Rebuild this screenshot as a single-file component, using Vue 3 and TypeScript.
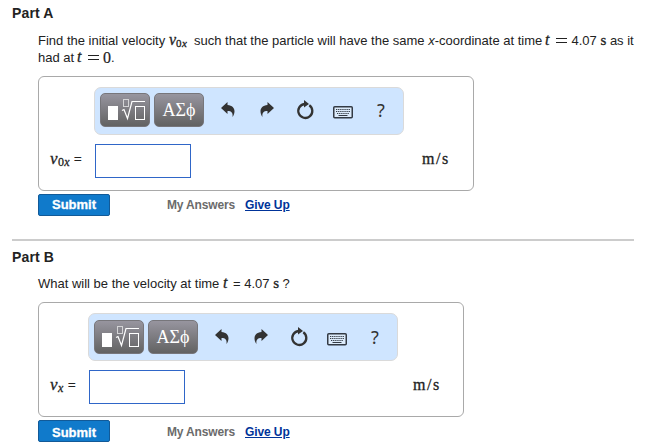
<script setup lang="ts">
import { ref } from 'vue'

interface Part {
  id: string
  title: string
  subscript: string
  unit: string
}

const parts: Part[] = [
  { id: 'a', title: 'Part A', subscript: '0x', unit: 'm/s' },
  { id: 'b', title: 'Part B', subscript: 'x', unit: 'm/s' },
]

const answers = ref<Record<string, string>>({ a: '', b: '' })
</script>

<template>
  <main class="page">
    <section v-for="part in parts" :key="part.id" class="part" :class="'part-' + part.id">
      <h2>{{ part.title }}</h2>
      <div class="content">
        <div v-if="part.id === 'a'" class="question">
          <div class="line">
            <span class="seg find">Find the initial velocity</span>
            <span class="seg var"><i class="m">v</i><span class="sub"><b>0</b><i>x</i></span></span>
            <span class="seg such">such that the particle will have the same <i>x</i>-coordinate at time</span>
            <span class="seg tvar"><i class="m">t</i></span>
            <span class="seg eq"><svg width="11" height="5" viewBox="0 0 11 5"><path d="M0 .5h11M0 4.500h11" stroke="#222" /></svg></span>
            <span class="seg">4.07 <span class="sec">s</span> as it</span>
          </div>
          <div class="line">
            <span class="seg had">had at</span>
            <span class="seg tvar"><i class="m">t</i></span>
            <span class="seg eq"><svg width="11" height="5" viewBox="0 0 11 5"><path d="M0 .5h11M0 4.500h11" stroke="#222" /></svg></span>
            <span class="seg zero">0</span><span class="seg">.</span>
          </div>
        </div>
        <div v-else class="question">
          <div class="line">
            <span class="seg what">What will be the velocity at time</span>
            <span class="seg tvar-b"><i class="m">t</i></span>
            <span class="seg">= 4.07 <span class="sec">s</span> ?</span>
          </div>
        </div>

        <div class="answer-box">
          <label class="label" :for="'answer-' + part.id">
            <span class="lv">v</span><span class="lsub"><b v-if="part.subscript === '0x'">0</b><i>x</i></span>
            <span class="leq">=</span>
          </label>
          <div class="entry">
            <div class="toolbar">
              <button class="tool" type="button">
                <svg width="48" height="32" viewBox="0 0 48 32">
                  <rect x="7" y="12" width="10" height="14" fill="#fff" />
                  <rect x="22.500" y="5.500" width="5" height="7" fill="none" stroke="#d4d4d6" />
                  <path d="M21 16.500l2-1 3.500 9 4.500-17H44" fill="none" stroke="#fff" stroke-width="1.200" />
                  <rect x="34.500" y="12.500" width="9" height="13" fill="none" stroke="#fff" />
                </svg>
              </button>
              <button class="tool greek" type="button">ΑΣϕ</button>
              <svg class="icon undo" width="14" height="15" viewBox="0 0 14 15">
                <path d="M6.500 0v3c4.700.3 7 3 7 6.300 0 2.200-.7 4-2 5.700.6-4.100-1-6-5-6v3L0 6z" fill="#333" />
              </svg>
              <svg class="icon redo" width="14" height="15" viewBox="0 0 14 15">
                <path d="M7.500 0v3c-4.700.3-7 3-7 6.300 0 2.200.7 4 2 5.700-.6-4.100 1-6 5-6v3L14 6z" fill="#333" />
              </svg>
              <svg class="icon reset" width="18" height="20" viewBox="0 0 18 20">
                <path d="M13.300 5.200A7 7 0 1 1 8.500 4" fill="none" stroke="#333" stroke-width="2.300" />
                <path d="M8 0l5 4-5 3.500z" fill="#333" />
              </svg>
              <svg class="icon keyboard" width="20" height="13" viewBox="0 0 20 13">
                <rect x=".75" y=".75" width="18.500" height="11" rx="1" fill="#dcebfb" stroke="#333a44" stroke-width="1.500" />
                <path d="M3 3.500h14M3 5.500h14M4 7.500h12" stroke="#333a44" stroke-width="1.200" stroke-dasharray="1.300 .8" />
                <path d="M5.500 9.500h9" stroke="#333a44" />
              </svg>
              <span class="help">?</span>
            </div>
            <input :id="'answer-' + part.id" v-model="answers[part.id]" type="text" autocomplete="off" />
          </div>
          <span class="unit">{{ part.unit }}</span>
        </div>

        <div class="actions">
          <button class="submit" type="button">Submit</button>
          <span class="my">My Answers</span>
          <a class="give" href="#">Give Up</a>
        </div>
      </div>
    </section>
  </main>
</template>

<style>
body {
  background: #fff;
}
</style>

<style scoped>
.page {
  box-sizing: border-box;
  width: 653px;
  height: 445px;
  padding-left: 12px;
  overflow: hidden;
  font-family: "Liberation Sans", Arial, sans-serif;
  font-size: 13px;
  color: #222;
}
.part {
  width: 622px;
  box-sizing: border-box;
}
.part-a {
  height: 241px;
  border-bottom: 2px solid #ccc;
  padding-top: 5px;
}
.part-b {
  padding-top: 8px;
}
h2 {
  margin: 0;
  height: 27px;
  font-size: 14px;
  line-height: 16px;
  letter-spacing: .15px;
}
.part-b h2 {
  height: 26px;
}
.content {
  padding-left: 26px;
}
.question {
  height: 44px;
}
.part-b .question {
  height: 27px;
}
.line {
  display: flex;
  height: 17px;
  line-height: 17px;
  white-space: nowrap;
}
.seg {
  flex: none;
}
.find { width: 131px; }
.var { width: 25px; }
.such { width: 351px; }
.had { width: 39px; }
.what { width: 185px; }
.tvar { width: 11px; }
.tvar-b { width: 10px; }
.m {
  font-family: "Liberation Serif", serif;
  font-size: 16px;
  line-height: 0;
  -webkit-text-stroke: .3px #222;
}
.sub {
  display: inline-block;
  font: 11px/1 "Liberation Serif", serif;
  letter-spacing: .5px;
  transform: translateY(2px);
  -webkit-text-stroke: .3px #222;
}
.sub b, .lsub b {
  font-weight: normal;
}
.eq {
  display: flex;
  align-items: center;
  width: 15px;
}
.such + .tvar + .eq {
  width: 15.500px;
}
.zero {
  font-family: "Liberation Serif", serif;
  font-size: 16px;
  width: 8px;
  -webkit-text-stroke: .2px #222;
}
.sec {
  font-family: "Liberation Serif", serif;
  font-size: 15px;
  line-height: 0;
  -webkit-text-stroke: .3px #222;
}
.answer-box {
  box-sizing: border-box;
  display: flex;
  width: 436px;
  height: 115px;
  border: 1px solid #a9a9a9;
  border-radius: 6px;
  padding: 10px 0 0 11px;
}
.part-b .answer-box {
  width: 426px;
}
.label {
  display: flex;
  width: 44px;
  padding-top: 62px;
  height: 20px;
  line-height: 20px;
}
.part-b .label {
  width: 38px;
}
.lv {
  width: 8px;
  font: italic 17px/20px "Liberation Serif", serif;
  -webkit-text-stroke: .3px #222;
}
.lsub {
  width: 16px;
  font: 12px/26px "Liberation Serif", serif;
  letter-spacing: .3px;
  -webkit-text-stroke: .3px #222;
}
.part-b .lsub {
  width: 10px;
}
.leq {
  font-size: 13px;
  -webkit-text-stroke: .3px #222;
}
.entry {
  width: 310px;
}
.toolbar {
  box-sizing: border-box;
  display: flex;
  align-items: flex-start;
  height: 48px;
  border: 1px solid #dadada;
  border-radius: 7px;
  background: #cfe5ff;
  padding: 5px 0 0 5px;
}
.part-b .toolbar {
  padding-top: 6px;
}
.tool {
  box-sizing: border-box;
  flex: none;
  width: 50px;
  height: 34px;
  margin: 0 4px 0 0;
  padding: 0;
  border: 1px solid #77767b;
  border-radius: 5px;
  background: linear-gradient(#97959f, #626262);
  color: #fff;
}
.tool svg {
  display: block;
}
.greek {
  margin-right: 17px;
  font: 18px/30px "Liberation Serif", serif;
}
.icon {
  flex: none;
}
.undo { margin-top: 9px; }
.redo { margin: 9px 0 0 25px; }
.reset { margin: 7px 0 0 22px; }
.keyboard { margin: 13px 0 0 19px; }
.help {
  margin: 7px 0 0 24px;
  font: 18px/20px "Noto Sans", sans-serif;
  color: #333;
}
input {
  box-sizing: border-box;
  display: block;
  width: 96px;
  height: 34px;
  margin: 9px 0 0 1px;
  padding: 0 4px;
  border: 1px solid #2f66c8;
  border-radius: 0;
  background: #fff;
  font: 14px "Liberation Sans", sans-serif;
  outline: none;
}
.unit {
  margin: 62px 0 0 18px;
  font: 16px/20px "Liberation Serif", serif;
  letter-spacing: 1.5px;
  -webkit-text-stroke: .3px #222;
}
.part-b .unit {
  margin-left: 15px;
}
.actions {
  display: flex;
  padding-top: 3px;
  font-size: 12px;
  font-weight: bold;
  line-height: 22px;
}
.part-b .actions {
  line-height: 24px;
}
.submit {
  box-sizing: border-box;
  width: 72px;
  height: 22px;
  padding: 0;
  border: 1px solid #125a98;
  border-radius: 2px;
  background: #107acb;
  color: #fff;
  font: bold 13px/20px "Liberation Sans", sans-serif;
  -webkit-text-stroke: .3px #fff;
}
.part-b .submit {
  padding-top: 2px;
}
.my {
  width: 78px;
  margin-left: 57px;
  color: #6b6b6b;
  letter-spacing: -.15px;
}
.give {
  color: #003399;
  letter-spacing: -.1px;
}
</style>
